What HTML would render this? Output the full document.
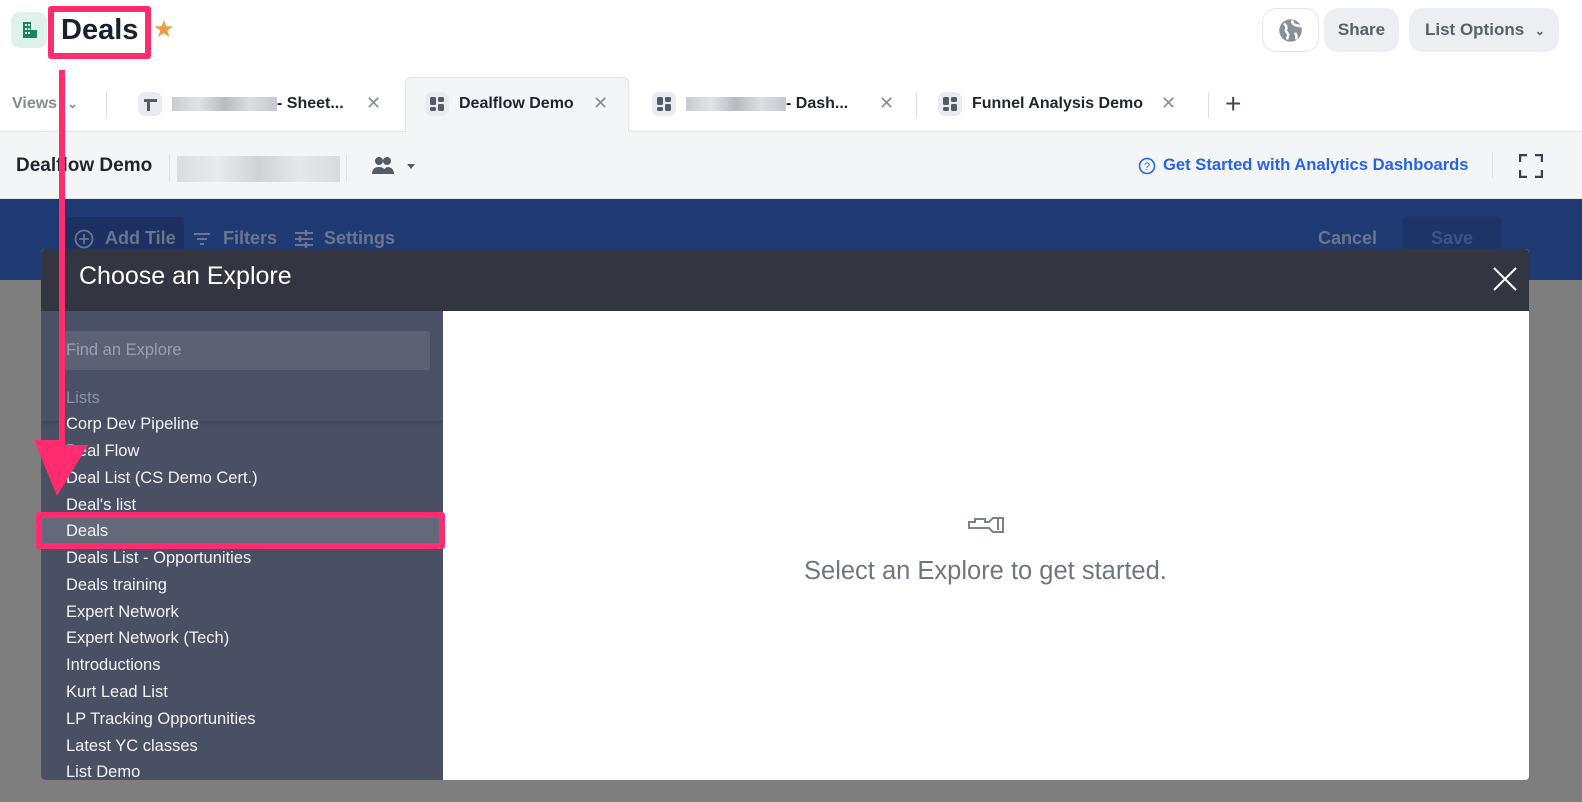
<!DOCTYPE html>
<html><head><meta charset="utf-8"><style>
*{box-sizing:border-box;margin:0;padding:0}
body{width:1582px;height:802px;overflow:hidden;background:#fff;font-family:"Liberation Sans",sans-serif;position:relative}
.abs{position:absolute}
.tab{position:absolute;top:88px;height:32px;display:flex;align-items:center;font-size:16px;font-weight:bold;color:#1f2530}
.ic{width:24px;height:24px;border-radius:7px;background:#e9ebee;display:inline-block;margin-right:10px;position:relative}
.x{color:#8a8f98;font-size:18px;font-weight:normal;position:absolute}
.blur{display:inline-block;height:14px;background:linear-gradient(90deg,#c8cbd0,#e1e3e6,#b7bac0,#dcdee2,#c5c8cd);}
.li{position:absolute;left:66px;color:#f2f3f5;font-size:16.5px}
.tb{position:absolute;top:228px;font-size:18px;font-weight:bold;color:#6b768c}
</style></head><body>
<!-- header -->
<div class="abs" style="left:11px;top:12px;width:36px;height:36px;border-radius:9px;background:#dff2ea"></div>
<svg class="abs" style="left:20px;top:20px" width="20" height="20" viewBox="0 0 20 20"><path d="M3 2h8v16H3z M11 10h6v8h-6z" fill="#17865a"/><g fill="#dff2ea"><rect x="5" y="4" width="2" height="2"/><rect x="8" y="4" width="2" height="2"/><rect x="5" y="8" width="2" height="2"/><rect x="8" y="8" width="2" height="2"/><rect x="5" y="12" width="2" height="2"/><rect x="8" y="12" width="2" height="2"/></g></svg>
<div class="abs" style="left:48px;top:6px;width:103px;height:53px;border:6px solid #ff2d6f;border-radius:3px;background:#fff"></div>
<div class="abs" style="left:61px;top:14px;font-size:29px;font-weight:bold;color:#1a2030">Deals</div>
<div class="abs" style="left:153px;top:15px;font-size:24px;color:#f29a3e">★</div>
<div class="abs" style="left:1262px;top:8px;width:57px;height:44px;border:1px solid #e3e5e8;border-radius:14px"></div>
<svg class="abs" style="left:1277px;top:17px" width="27" height="27" viewBox="0 0 24 24"><circle cx="12" cy="12" r="10" fill="#8b9098"/><path d="M6 6c2 1 3 3 2 5s2 3 2 5l-1 4M14 3c-1 2 0 3 2 4s4 0 5 2M16 14c1 2 2 3 1 6" stroke="#fff" stroke-width="2.2" fill="none"/></svg>
<div class="abs" style="left:1324px;top:8px;width:75px;height:44px;background:#eceef1;border-radius:14px;font-size:17px;font-weight:bold;color:#5a606a;text-align:center;line-height:44px">Share</div>
<div class="abs" style="left:1409px;top:8px;width:150px;height:44px;background:#eceef1;border-radius:14px;font-size:17px;font-weight:bold;color:#5a606a;line-height:44px;padding-left:16px">List Options <span style="font-size:12px;margin-left:6px">⌄</span></div>
<!-- tabs -->
<div class="abs" style="left:0;top:131px;width:1582px;height:1px;background:#e1e3e6"></div>
<div class="abs" style="left:405px;top:77px;width:224px;height:56px;background:#f4f5f7;border:1px solid #e1e3e6;border-bottom:none;border-radius:6px 6px 0 0"></div>
<div class="tab" style="left:12px;color:#858a93;font-weight:bold">Views <span style="font-size:13px;margin-left:10px">⌄</span></div>
<div class="abs" style="left:106px;top:92px;width:1px;height:26px;background:#dde0e3"></div>
<div class="tab" style="left:138px"><span class="ic"><span class="abs" style="left:6px;top:7px;width:13px;height:3px;background:#555b66"></span><span class="abs" style="left:9px;top:7px;width:3px;height:12px;background:#555b66"></span></span><span class="blur" style="width:105px"></span>- Sheet...</div><div class="x" style="left:366px;top:93px">✕</div>
<div class="tab" style="left:425px"><span class="ic"><svg class="abs" style="left:5px;top:5px" width="14" height="14"><rect x="0" y="0" width="6" height="8" rx="1.5" fill="#555b66"/><rect x="8" y="0" width="6" height="5" rx="1.5" fill="#555b66"/><rect x="0" y="10" width="6" height="4" rx="1.5" fill="#555b66"/><rect x="8" y="7" width="6" height="7" rx="1.5" fill="#555b66"/></svg></span>Dealflow Demo</div><div class="x" style="left:593px;top:93px">✕</div>
<div class="tab" style="left:652px"><span class="ic"><svg class="abs" style="left:5px;top:5px" width="14" height="14"><rect x="0" y="0" width="6" height="8" rx="1.5" fill="#555b66"/><rect x="8" y="0" width="6" height="5" rx="1.5" fill="#555b66"/><rect x="0" y="10" width="6" height="4" rx="1.5" fill="#555b66"/><rect x="8" y="7" width="6" height="7" rx="1.5" fill="#555b66"/></svg></span><span class="blur" style="width:100px"></span>- Dash...</div><div class="x" style="left:879px;top:93px">✕</div>
<div class="abs" style="left:916px;top:92px;width:1px;height:26px;background:#dde0e3"></div>
<div class="tab" style="left:938px"><span class="ic"><svg class="abs" style="left:5px;top:5px" width="14" height="14"><rect x="0" y="0" width="6" height="8" rx="1.5" fill="#555b66"/><rect x="8" y="0" width="6" height="5" rx="1.5" fill="#555b66"/><rect x="0" y="10" width="6" height="4" rx="1.5" fill="#555b66"/><rect x="8" y="7" width="6" height="7" rx="1.5" fill="#555b66"/></svg></span>Funnel Analysis Demo</div><div class="x" style="left:1161px;top:93px">✕</div>
<div class="abs" style="left:1208px;top:92px;width:1px;height:26px;background:#dde0e3"></div>
<div class="abs" style="left:1225px;top:88px;font-size:28px;color:#444a55;font-weight:300">+</div>
<!-- subheader -->
<div class="abs" style="left:0;top:132px;width:1582px;height:67px;background:#f4f5f7;border-bottom:1px solid #e1e3e6"></div>
<div class="abs" style="left:16px;top:155px;font-size:19px;font-weight:bold;color:#1f2530">Dealflow Demo</div>
<div class="abs" style="left:169px;top:155px;width:1px;height:26px;background:#dde0e3"></div>
<span class="blur abs" style="left:177px;top:156px;width:163px;height:26px;opacity:.6"></span>
<div class="abs" style="left:346px;top:155px;width:1px;height:26px;background:#dde0e3"></div>
<svg class="abs" style="left:371px;top:155px" width="48" height="22"><circle cx="8" cy="6" r="4" fill="#555b66"/><circle cx="16" cy="6" r="4" fill="#555b66"/><path d="M1 19c0-5 3-7 7-7s7 2 7 7zM12 19c0-4 2-6 4-7 4 0 7 2 7 7z" fill="#555b66"/><path d="M36 9h8l-4 5z" fill="#555b66"/></svg>
<svg class="abs" style="left:1138px;top:157px" width="18" height="18"><circle cx="9" cy="9" r="7.5" stroke="#2563eb" stroke-width="1.6" fill="none"/><text x="9" y="13" font-size="11" text-anchor="middle" fill="#2563eb" font-family="Liberation Sans">?</text></svg>
<div class="abs" style="left:1163px;top:155px;font-size:16.6px;font-weight:bold;color:#2563eb">Get Started with Analytics Dashboards</div>
<div class="abs" style="left:1492px;top:152px;width:1px;height:26px;background:#dde0e3"></div>
<svg class="abs" style="left:1519px;top:154px" width="24" height="24" fill="none" stroke="#3a404a" stroke-width="2.4"><path d="M1 8V1h7M16 1h7v7M23 16v7h-7M8 23H1v-7"/></svg>
<!-- blue band -->
<div class="abs" style="left:0;top:199px;width:1582px;height:81px;background:#1f3a72"></div>
<div class="abs" style="left:66px;top:217px;width:118px;height:40px;background:#1c3162;border-radius:4px"></div>
<svg class="abs" style="left:74px;top:229px" width="20" height="20" fill="none" stroke="#6b768c" stroke-width="1.8"><circle cx="10" cy="10" r="8.5"/><path d="M10 5v10M5 10h10"/></svg>
<div class="tb" style="left:105px">Add Tile</div>
<svg class="abs" style="left:193px;top:231px" width="18" height="16" stroke="#6b768c" stroke-width="2"><path d="M1 3h16M4 8h10M7 13h4"/></svg>
<div class="tb" style="left:223px">Filters</div>
<svg class="abs" style="left:294px;top:229px" width="20" height="20" stroke="#6b768c" stroke-width="2"><path d="M1 4h18M1 10h18M1 16h18"/><path d="M12 1v6M6 7v6M12 13v6" stroke-width="2.4"/></svg>
<div class="tb" style="left:324px">Settings</div>
<div class="tb" style="left:1318px">Cancel</div>
<div class="abs" style="left:1403px;top:217px;width:98px;height:40px;background:#1c3566;border-radius:4px;color:#3d5486;font-size:18px;font-weight:bold;text-align:center;line-height:42px">Save</div>
<!-- overlay -->
<div class="abs" style="left:0;top:280px;width:1582px;height:522px;background:#7e7e7e"></div>
<!-- modal -->
<div class="abs" style="left:41px;top:249px;width:1488px;height:531px;background:#fff;border-radius:4px;overflow:hidden">
 <div class="abs" style="left:0;top:0;width:1488px;height:62px;background:#333640"></div>
 <div class="abs" style="left:38px;top:13px;font-size:25px;color:#fff;font-weight:300">Choose an Explore</div>
 <svg class="abs" style="left:1452px;top:18px" width="24" height="24" stroke="#fff" stroke-width="2"><path d="M1 1L23 23M23 1L1 23"/></svg>
 <div class="abs" style="left:0;top:62px;width:402px;height:469px;background:#4a5063"></div>
 <div class="abs" style="left:0;top:62px;width:402px;height:110px;background:#4b5164;box-shadow:0 2px 3px rgba(0,0,0,.15)"></div>
 <div class="abs" style="left:23px;top:82px;width:366px;height:39px;background:#5c6273;border-radius:3px;color:#9aa0ad;font-size:16.5px;line-height:39px;padding-left:2px">Find an Explore</div>
 <div class="abs" style="left:25px;top:140px;color:#8d93a1;font-size:16.5px">Lists</div>
 <div class="abs" style="left:402px;top:62px;width:1086px;height:469px;background:#fff"></div>
 <svg class="abs" style="left:926px;top:267px" width="38" height="18" fill="none" stroke="#7b8190" stroke-width="2"><path d="M2 6h6V3h10v3h4l4-4h10v14H26l-4-4H2z M31 3v11"/></svg>
 <div class="abs" style="left:763px;top:308px;font-size:25.5px;color:#707680;font-weight:300">Select an Explore to get started.</div>
</div>
<div class="li" style="top:415px">Corp Dev Pipeline</div>
<div class="li" style="top:442px">Deal Flow</div>
<div class="li" style="top:469px">Deal List (CS Demo Cert.)</div>
<div class="li" style="top:496px">Deal's list</div>
<div class="abs" style="left:36px;top:512px;width:409px;height:37px;border:6px solid #ff2d6f;border-radius:3px;background:#636979"></div>
<div class="li" style="top:522px">Deals</div>
<div class="li" style="top:549px">Deals List - Opportunities</div>
<div class="li" style="top:576px">Deals training</div>
<div class="li" style="top:603px">Expert Network</div>
<div class="li" style="top:629px">Expert Network (Tech)</div>
<div class="li" style="top:656px">Introductions</div>
<div class="li" style="top:683px">Kurt Lead List</div>
<div class="li" style="top:710px">LP Tracking Opportunities</div>
<div class="li" style="top:737px">Latest YC classes</div>
<div class="li" style="top:763px">List Demo</div>
<!-- arrow -->
<svg class="abs" style="left:0;top:0" width="120" height="520"><path d="M59 70h6v375h23L57 496 34 440h25z" fill="#ff2d6f"/></svg>
</body></html>
